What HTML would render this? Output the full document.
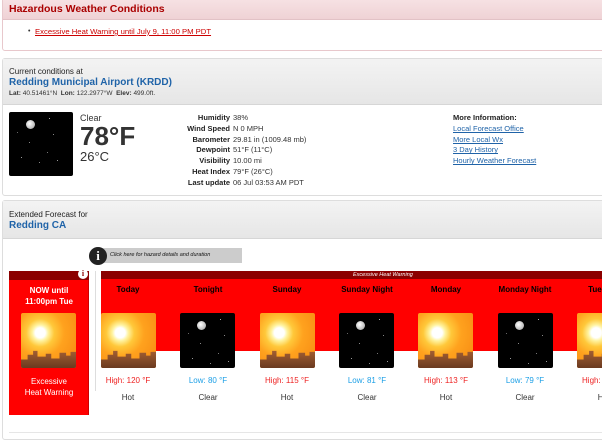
<!DOCTYPE html>
<html><head><style>
*{margin:0;padding:0;box-sizing:border-box}
body{width:602px;height:434px;overflow:hidden;background:#fff;font-family:"Liberation Sans",Arial,sans-serif;position:relative;color:#333}
.abs{position:absolute}
a{color:#1f63a8;text-decoration:underline}
.sun{background:radial-gradient(circle at 35% 36%,#fff 0,#fff 5px,#fff3a0 8px,#ffc83a 14px,#ffa21e 24px,#f58510 50px);overflow:hidden;border-radius:2px}
.sun:after{content:"";position:absolute;left:0;right:0;bottom:0;height:19px;background:linear-gradient(#a86234,#6a3a20);clip-path:polygon(0 55%,12% 55%,12% 30%,22% 30%,22% 10%,30% 10%,30% 40%,45% 40%,45% 25%,55% 25%,55% 50%,70% 50%,70% 20%,82% 20%,82% 35%,90% 35%,90% 15%,100% 15%,100% 100%,0 100%)}
.moon{background:#000;border-radius:2px;overflow:hidden}
.moon:before{content:"";position:absolute;left:17px;top:8px;width:9px;height:9px;border-radius:50%;background:radial-gradient(circle at 40% 40%,#fff,#999)}
.moon:after{content:"";position:absolute;left:0;top:0;width:1px;height:1px;background:transparent;box-shadow:40px 6px #aaa,44px 22px #888,20px 30px #888,12px 45px #999,38px 40px #777,48px 48px #999,8px 20px #666,30px 50px #888}
.col{position:absolute;width:80px;text-align:center;font-size:8px}
.day{top:285px;font-weight:bold;color:#000;font-size:8px}
.hi{top:376px;color:#e22;font-size:8px}
.lo{top:376px;color:#1a9ee6;font-size:8px}
.cd{top:393px;color:#333;font-size:8px}
</style></head><body>
<div class="abs" style="left:2px;top:-2px;width:610px;height:53px;border:1px solid #e8c8cc;border-radius:3px"></div>
<div class="abs" style="left:3px;top:0;width:610px;height:20px;background:linear-gradient(#f6e1e3,#efd2d5);border-bottom:1px solid #e2c2c6"></div>
<div class="abs" style="left:9px;top:3px;font-size:10.5px;font-weight:bold;color:#a00">Hazardous Weather Conditions</div>
<div class="abs" style="left:28px;top:28px;font-size:7px;color:#333">&#8226;</div>
<div class="abs" style="left:35px;top:27px;font-size:7.7px;color:#c00;text-decoration:underline">Excessive Heat Warning until July 9, 11:00 PM PDT</div>
<div class="abs" style="left:2px;top:58px;width:610px;height:138px;border:1px solid #ddd;border-radius:3px"></div>
<div class="abs" style="left:3px;top:59px;width:610px;height:46px;background:linear-gradient(#f3f3f3,#e6e6e6);border-bottom:1px solid #d6d6d6"></div>
<div class="abs" style="left:9px;top:67px;font-size:8px;color:#222">Current conditions at</div>
<div class="abs" style="left:9px;top:77px;font-size:10px;font-weight:bold;color:#1f63a8">Redding Municipal Airport (KRDD)</div>
<div class="abs" style="left:9px;top:90px;font-size:6.5px;color:#333"><b>Lat:</b>&nbsp;40.51461°N &nbsp;<b>Lon:</b>&nbsp;122.2977°W &nbsp;<b>Elev:</b>&nbsp;499.0ft.</div>
<div class="abs moon" style="left:9px;top:112px;width:64px;height:64px"></div>
<div class="abs" style="left:80px;top:113px;font-size:9px;color:#333">Clear</div>
<div class="abs" style="left:80px;top:121px;font-size:26px;font-weight:bold;color:#333">78°F</div>
<div class="abs" style="left:80px;top:149px;font-size:13px;color:#333">26°C</div>
<div class="abs" style="left:150px;top:113px;width:80px;text-align:right;font-size:7.5px;font-weight:bold;line-height:10.8px;color:#222">Humidity<br>Wind Speed<br>Barometer<br>Dewpoint<br>Visibility<br>Heat Index<br>Last update</div>
<div class="abs" style="left:233px;top:113px;font-size:7.5px;line-height:10.8px;color:#333">38%<br>N 0 MPH<br>29.81 in (1009.48 mb)<br>51°F (11°C)<br>10.00 mi<br>79°F (26°C)<br>06 Jul 03:53 AM PDT</div>
<div class="abs" style="left:453px;top:113px;font-size:7.5px;line-height:10.8px"><b style="color:#222">More Information:</b><br><a>Local Forecast Office</a><br><a>More Local Wx</a><br><a>3 Day History</a><br><a>Hourly Weather Forecast</a></div>
<div class="abs" style="left:2px;top:200px;width:610px;height:240px;border:1px solid #ddd;border-radius:3px"></div>
<div class="abs" style="left:3px;top:201px;width:610px;height:38px;background:linear-gradient(#f3f3f3,#e6e6e6);border-bottom:1px solid #d6d6d6"></div>
<div class="abs" style="left:9px;top:210px;font-size:8px;color:#222">Extended Forecast for</div>
<div class="abs" style="left:9px;top:220px;font-size:10px;font-weight:bold;color:#1f63a8">Redding CA</div>
<div class="abs" style="left:100px;top:248px;width:142px;height:15px;background:#ccc"></div>
<div class="abs" style="left:89px;top:247px;width:18px;height:18px;border-radius:50%;background:#222;color:#fff;font:bold 13px 'Liberation Serif',serif;text-align:center;line-height:18px">i</div>
<div class="abs" style="left:110px;top:252px;font-size:5.5px;font-style:italic;color:#111">Click here for hazard details and duration</div>
<div class="abs" style="left:9px;top:271px;width:80px;height:144px;background:#f00;border-right:1px solid #c00"></div>
<div class="abs" style="left:9px;top:271px;width:80px;height:9px;background:#8b0000"></div>
<div class="abs" style="left:78px;top:269px;width:10px;height:10px;border-radius:50%;background:#fff;color:#8b0000;font:bold 8px 'Liberation Serif',serif;text-align:center;line-height:10px">i</div>
<div class="abs" style="left:9px;top:285px;width:80px;text-align:center;color:#fff;font-size:8px;font-weight:bold;line-height:11px">NOW until<br>11:00pm Tue</div>
<div class="abs sun" style="left:21px;top:313px;width:55px;height:55px"></div>
<div class="abs" style="left:9px;top:376px;width:80px;text-align:center;color:#fff;font-size:8px;line-height:11px">Excessive<br>Heat Warning</div>
<div class="abs" style="left:95px;top:271px;width:1px;height:120px;background:#ddd"></div>
<div class="abs" style="left:101px;top:271px;width:510px;height:80px;background:#f00"></div>
<div class="abs" style="left:101px;top:271px;width:510px;height:8px;background:#8b0000"></div>
<div class="abs" style="left:353px;top:271px;font-size:5.5px;font-style:italic;color:#fff;line-height:8px">Excessive Heat Warning</div>

<div class="col day" style="left:88px">Today</div>
<div class="abs sun" style="left:101px;top:313px;width:55px;height:55px"></div>
<div class="col hi" style="left:88px">High: 120 °F</div>
<div class="col cd" style="left:88px">Hot</div>

<div class="col day" style="left:168px">Tonight</div>
<div class="abs moon" style="left:180px;top:313px;width:55px;height:55px"></div>
<div class="col lo" style="left:168px">Low: 80 °F</div>
<div class="col cd" style="left:168px">Clear</div>

<div class="col day" style="left:247px">Sunday</div>
<div class="abs sun" style="left:260px;top:313px;width:55px;height:55px"></div>
<div class="col hi" style="left:247px">High: 115 °F</div>
<div class="col cd" style="left:247px">Hot</div>

<div class="col day" style="left:327px">Sunday Night</div>
<div class="abs moon" style="left:339px;top:313px;width:55px;height:55px"></div>
<div class="col lo" style="left:327px">Low: 81 °F</div>
<div class="col cd" style="left:327px">Clear</div>

<div class="col day" style="left:406px">Monday</div>
<div class="abs sun" style="left:418px;top:313px;width:55px;height:55px"></div>
<div class="col hi" style="left:406px">High: 113 °F</div>
<div class="col cd" style="left:406px">Hot</div>

<div class="col day" style="left:485px">Monday Night</div>
<div class="abs moon" style="left:498px;top:313px;width:55px;height:55px"></div>
<div class="col lo" style="left:485px">Low: 79 °F</div>
<div class="col cd" style="left:485px">Clear</div>

<div class="col day" style="left:564px">Tuesday</div>
<div class="abs sun" style="left:577px;top:313px;width:55px;height:55px"></div>
<div class="col hi" style="left:564px">High: 114 °F</div>
<div class="col cd" style="left:564px">Hot</div>
<div class="abs" style="left:9px;top:432px;width:600px;height:1px;background:#e6e6e6"></div>
</body></html>
